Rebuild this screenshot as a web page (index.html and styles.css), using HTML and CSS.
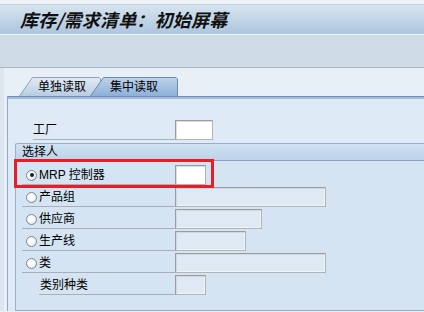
FILE: index.html
```html
<!DOCTYPE html>
<html lang="zh">
<head>
<meta charset="utf-8">
<title>库存/需求清单：初始屏幕</title>
<link rel="stylesheet" href="styles.css">
</head>
<body>
<div class="topstrip"></div>
<header class="titlebar"><h1 class="title">库存/需求清单：初始屏幕</h1></header>
<div class="toolbar"></div>
<main class="main">
  <div class="tabs">
    <div class="tab tab-inactive">
      <svg class="tab-bg" width="82" height="19" viewBox="0 0 82 19">
        <defs><linearGradient id="g1" x1="0" y1="0" x2="0" y2="1"><stop offset="0" stop-color="#e2ebf4"/><stop offset="1" stop-color="#b7cce2"/></linearGradient></defs>
        <path d="M0.5,19 L13.5,0.5 L80,0.5 L81.5,2 L81.5,19 Z" fill="url(#g1)"/>
        <path d="M0.5,19 L13.5,0.5 L80,0.5 L81.5,2 L81.5,19" fill="none" stroke="#8aa3bf"/>
      </svg>
      <span class="tab-text">单独读取</span>
    </div>
    <div class="tab tab-active">
      <svg class="tab-bg" width="88" height="19" viewBox="0 0 88 19">
        <defs><linearGradient id="g2" x1="0" y1="0" x2="0" y2="1"><stop offset="0" stop-color="#bdd2e9"/><stop offset="1" stop-color="#8eb0d8"/></linearGradient></defs>
        <path d="M0.5,19 L13.5,0.5 L86,0.5 L87.5,2 L87.5,19 Z" fill="url(#g2)"/>
        <path d="M0.5,19 L13.5,0.5 L86,0.5 L87.5,2 L87.5,19" fill="none" stroke="#6d8cb3"/>
      </svg>
      <span class="tab-text">集中读取</span>
    </div>
  </div>
  <section class="panel">
    <div class="row row-plant">
      <span class="lbl lbl-plant">工厂</span>
      <span class="field field-edit w38"></span>
    </div>
    <div class="group">
      <div class="group-head">选择人</div>
      <div class="group-body">
        <div class="row">
          <span class="lbl lbl-radio"><span class="radio radio-on"></span>MRP 控制器</span>
          <span class="field field-edit w31"></span>
        </div>
        <div class="row">
          <span class="lbl lbl-radio"><span class="radio"></span>产品组</span>
          <span class="field field-off w151"></span>
        </div>
        <div class="row">
          <span class="lbl lbl-radio"><span class="radio"></span>供应商</span>
          <span class="field field-off w87"></span>
        </div>
        <div class="row">
          <span class="lbl lbl-radio"><span class="radio"></span>生产线</span>
          <span class="field field-off w71"></span>
        </div>
        <div class="row">
          <span class="lbl lbl-radio"><span class="radio"></span>类</span>
          <span class="field field-off w151"></span>
        </div>
        <div class="row">
          <span class="lbl lbl-sub">类别种类</span>
          <span class="field field-off w31"></span>
        </div>
      </div>
      <div class="highlight"></div>
    </div>
  </section>
</main>
</body>
</html>
```

FILE: styles.css
```css
html, body {
  margin: 0;
  padding: 0;
}
body {
  width: 424px;
  height: 312px;
  overflow: hidden;
  background: #e9eff6;
  font-family: "Liberation Sans", "Noto Sans CJK SC", sans-serif;
  font-size: 12px;
  color: #000;
}
.topstrip {
  height: 4px;
  background: #eef1f5;
}
.titlebar {
  height: 29px;
  border-top: 1px solid #c3d2e1;
  background: linear-gradient(#d7e4f0, #adc5dd);
}
.title {
  margin: 0;
  padding-left: 20px;
  font-family: "Noto Sans CJK SC", sans-serif;
  font-size: 18px;
  font-weight: 700;
  font-style: italic;
  line-height: 29px;
  color: #111;
  letter-spacing: 0.2px;
}
.toolbar {
  height: 32px;
  border-top: 1px solid #f4f7fa;
  border-bottom: 1px solid #a8b8ca;
  background: #cfdce8;
}
.main {
  border-left: 4px solid #dde5ee;
  padding-left: 3px;
}
.tabs {
  display: flex;
  margin-left: 12px;
  padding-top: 9px;
  height: 19px;
}
.tab {
  position: relative;
  height: 19px;
  box-sizing: border-box;
  padding-top: 3px;
  line-height: 15px;
}
.tab-bg {
  position: absolute;
  left: 0;
  top: 0;
  display: block;
}
.tab-text {
  position: relative;
}
.tab-inactive {
  width: 82px;
  padding-left: 19px;
}
.tab-active {
  width: 88px;
  padding-left: 20px;
  margin-left: -11px;
}
.panel {
  border-top: 1px solid #6f8cb3;
  border-left: 1px solid #8ea8c7;
  box-shadow: inset 0 2px 0 #a2bedf;
  padding-top: 23px;
  background: #deeaf5;
}
.row {
  display: flex;
  align-items: flex-end;
  height: 20px;
}
.row + .row {
  margin-top: 2px;
}
.lbl {
  display: flex;
  align-items: center;
  box-sizing: border-box;
  height: 20px;
  border-bottom: 1px solid #a9afb6;
  line-height: 14px;
  padding-top: 1px;
  white-space: nowrap;
}
.lbl-plant {
  margin-left: 25px;
  width: 142px;
}
.lbl-radio {
  width: 153px;
  padding-left: 4px;
}
.lbl-sub {
  margin-left: 17px;
  width: 136px;
  padding-left: 1px;
}
.radio {
  position: relative;
  width: 11px;
  height: 11px;
  box-sizing: border-box;
  border-radius: 50%;
  border: 1px solid #7d8793;
  background: radial-gradient(circle at 40% 40%, #ffffff 30%, #d5dce5 100%);
  margin-right: 2px;
  flex: none;
}
.radio-on::after {
  content: "";
  position: absolute;
  left: 2.5px;
  top: 2.5px;
  width: 4px;
  height: 4px;
  border-radius: 50%;
  background: #1e1e1e;
}
.field {
  display: block;
  box-sizing: border-box;
  height: 20px;
  border: 1px solid #9c9c9c;
  border-bottom-color: #b4b4b4;
  border-right-color: #b4b4b4;
  flex: none;
}
.field-edit {
  background: #fff;
  box-shadow: inset 1px 1px 0 #dcdcdc;
}
.field-off {
  background: #dfe9f3;
  box-shadow: inset 1px 1px 0 #cfd8e1, inset -1px -1px 0 #eef3f8;
}
.w31 { width: 31px; }
.w38 { width: 38px; }
.w71 { width: 71px; }
.w87 { width: 87px; }
.w151 { width: 151px; }
.group {
  position: relative;
  margin-top: 3px;
  margin-left: 7px;
  border-left: 1px solid #97b0cb;
  border-bottom: 1px solid #8fabcb;
  border-top-left-radius: 2px;
  background: #d4e4f2;
}
.group-head {
  height: 16px;
  line-height: 16px;
  padding-left: 6px;
  border-top: 1px solid #96aec9;
  border-bottom: 1px solid #8aa4c4;
  border-top-left-radius: 2px;
  background: linear-gradient(#d0e1f1, #bdd3ea);
}
.group-body {
  padding: 4px 0 15px 6px;
}
.highlight {
  position: absolute;
  left: -2px;
  top: 16px;
  width: 200px;
  height: 29px;
  box-sizing: border-box;
  border: 3px solid #ea1c26;
}
```
